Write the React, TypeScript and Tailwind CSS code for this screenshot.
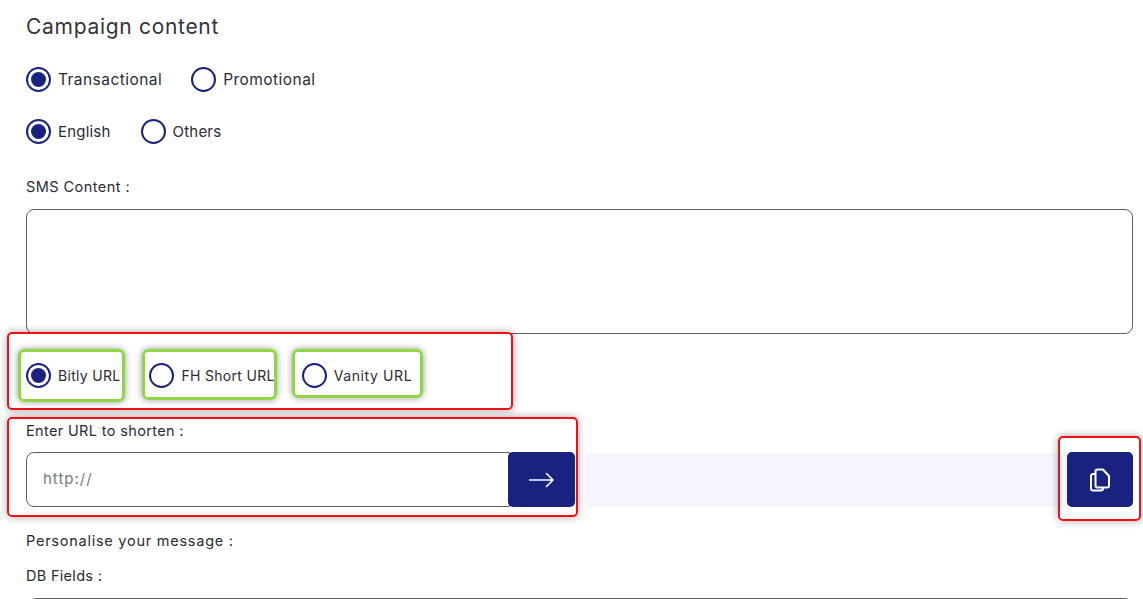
import React from "react";

const font = { fontFamily: 'Inter, "Liberation Sans", sans-serif' };

function Radio({ label, checked, text = "text-[15.5px] tracking-[0.45px]" }: { label: string; checked?: boolean; text?: string }) {
  return (
    <label className="flex items-center gap-[7px]">
      <span className="flex h-[25px] w-[25px] shrink-0 items-center justify-center rounded-full border-2 border-[#19227f] bg-white">
        {checked && <span className="h-[15px] w-[15px] rounded-full bg-[#19227f]" />}
      </span>
      <span className={`${text} leading-[25px] text-[#2b2b33]`}>{label}</span>
    </label>
  );
}

// annotation box drawn over the form
function Mark({ className }: { className: string }) {
  return <div className={`pointer-events-none absolute ${className}`} />;
}

export default function App() {
  return (
    <div className="h-[599px] w-[1143px] overflow-hidden bg-white pl-[26px] pr-[10px]" style={font}>
      <h2 className="pt-[13px] text-[21px] leading-[28px] tracking-[0.7px] text-[#33333b]">Campaign content</h2>

      <div className="mt-[26px] flex gap-[29px]">
        <Radio label="Transactional" checked />
        <Radio label="Promotional" />
      </div>
      <div className="mt-[27px] flex gap-[30px]">
        <Radio label="English" checked text="text-[15px] tracking-[0.2px]" />
        <Radio label="Others" text="text-[15px] tracking-[0.2px]" />
      </div>

      <p className="mt-[33px] text-[14.5px] leading-[20px] tracking-[0.45px] text-[#2b2b33]">SMS Content :</p>
      <textarea className="mt-[12px] block h-[125px] w-full resize-none rounded-[8px] border border-[#5f5f5f] bg-white" />

      <div className="relative flex h-[83px] items-center pb-[1px]">
        <Mark className="-left-[19px] -top-[2px] h-[78px] w-[506px] rounded-[5px] border-2 border-[#f40f14] shadow-[0_0_8px_rgba(0,0,0,0.35)]" />
        <div className="relative">
          <Mark className="-left-[8px] -top-[14px] h-[53px] w-[107px] rounded-[6px] border-[3px] border-[#93d548] shadow-[0_0_7px_rgba(0,0,0,0.4)]" />
          <Radio label="Bitly URL" checked text="text-[14px] tracking-[0.3px]" />
        </div>
        <div className="relative ml-[29px]">
          <Mark className="-left-[7px] -top-[14px] h-[51px] w-[135px] rounded-[6px] border-[3px] border-[#93d548] shadow-[0_0_7px_rgba(0,0,0,0.4)]" />
          <Radio label="FH Short URL" text="text-[14px] tracking-[0.3px]" />
        </div>
        <div className="relative ml-[27px]">
          <Mark className="-left-[10px] -top-[14px] h-[49px] w-[131px] rounded-[6px] border-[3px] border-[#93d548] shadow-[0_0_7px_rgba(0,0,0,0.4)]" />
          <Radio label="Vanity URL" text="text-[14px] tracking-[0.6px]" />
        </div>
      </div>

      <div className="relative">
        <Mark className="-left-[19px] top-0 h-[100px] w-[571px] rounded-[5px] border-2 border-[#f40f14] shadow-[0_0_8px_rgba(0,0,0,0.35)]" />
        <p className="pt-[4px] text-[14.5px] leading-[20px] tracking-[0.35px] text-[#2b2b33]">Enter URL to shorten :</p>
        <div className="mt-[11px] flex h-[55px] items-stretch">
          <div className="flex w-[549px] items-stretch">
            <div className="flex flex-1 items-center rounded-l-[8px] border border-[#5f5f5f] pl-[16px] text-[15px] tracking-[1px] text-[#77797f]">
              http://
            </div>
            <button className="-ml-[2px] flex w-[67px] items-center justify-center rounded-[5px] bg-[#19227f]">
              <svg width="26" height="16" viewBox="0 0 26 16" fill="none" stroke="white" strokeWidth="1.6" strokeLinecap="round" strokeLinejoin="round">
                <path d="M0.500 8h23.500M17.500 1.500 24 8 17.500 14.500" />
              </svg>
            </button>
          </div>
          <div className="ml-[10px] mt-px flex-1 rounded-l-[5px] bg-[#f4f5fd]" />
          <div className="relative">
            <Mark className="-left-[9px] -top-[16px] h-[85px] w-[83px] rounded-[5px] border-2 border-[#f40f14] shadow-[0_0_8px_rgba(0,0,0,0.35)]" />
            <button className="flex h-full w-[66px] items-center justify-center rounded-[5px] bg-[#19227f]">
              <svg width="22" height="24" viewBox="0 0 22 24" fill="none" stroke="white" strokeWidth="2" strokeLinejoin="round">
                <path d="M8.500 1.500h5.500l6 6.500v9.500a2 2 0 0 1-2 2H8.500a2 2 0 0 1-2-2v-14a2 2 0 0 1 2-2Z" />
                <path d="M6.500 6H4a2 2 0 0 0-2 2v12.500a2 2 0 0 0 2 2h8a2 2 0 0 0 2-2v-1" />
              </svg>
            </button>
          </div>
        </div>
      </div>

      <p className="mt-[24px] text-[14.5px] leading-[20px] tracking-[0.75px] text-[#2b2b33]">Personalise your message :</p>
      <p className="mt-[15px] text-[14.5px] leading-[20px] tracking-[0.3px] text-[#2b2b33]">DB Fields :</p>
      <div className="mt-[12px] ml-[2px] h-[20px] rounded-t-[8px] border border-[#5f5f5f]" />
    </div>
  );
}
